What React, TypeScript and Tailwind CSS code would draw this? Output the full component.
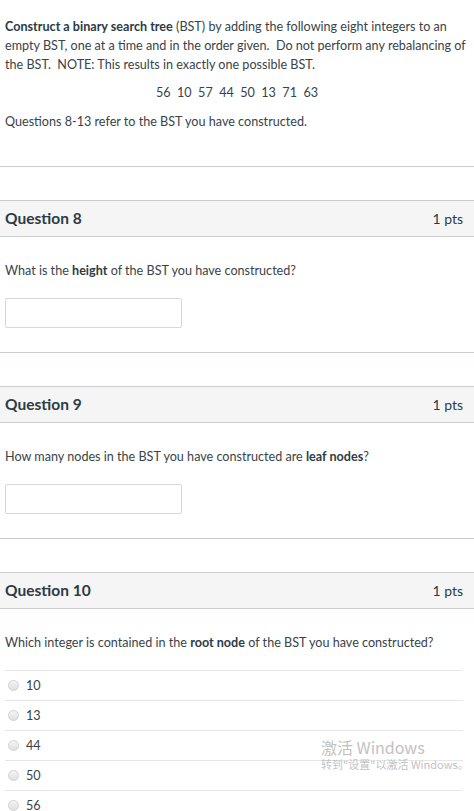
import React from "react";

const questions = [
  {
    num: 8,
    body: (
      <>
        What is the <strong className="font-bold text-[#2d3b45]">height</strong> of the BST you have constructed?
      </>
    ),
  },
  {
    num: 9,
    body: (
      <>
        How many nodes in the BST you have constructed are{" "}
        <strong className="font-bold text-[#2d3b45]">leaf nodes</strong>?
      </>
    ),
  },
];

const options = ["10", "13", "44", "50", "56"];

function QuestionHeader({ num }: { num: number }) {
  return (
    <div className="flex h-[37px] items-center justify-between border-y border-[#c9cdd1] bg-[#f5f5f5] pl-[5px] pr-[11px]">
      <span className="text-[15.5px] font-bold text-[#2d3b45]">Question {num}</span>
      <span className="text-[14px] text-[#2d3b45]">1 pts</span>
    </div>
  );
}

export default function App() {
  return (
    <div className="relative h-[811px] overflow-hidden bg-white font-['Lato','Liberation_Sans',sans-serif] text-[12.6px] leading-[19px] text-[#38434a]">
      <section className="px-[5px] pt-[17px] pb-[35px]">
        <p>
          <strong className="font-bold text-[#2d3b45]">Construct a binary search tree</strong> (BST) by adding the
          following eight integers to an empty BST, one at a time and in the order given.&nbsp; Do not perform any
          rebalancing of the BST.&nbsp; NOTE: This results in exactly one possible BST.
        </p>
        <p className="mt-[9px] text-center whitespace-pre">56  10  57  44  50  13  71  63</p>
        <p className="mt-[10px]">Questions 8-13 refer to the BST you have constructed.</p>
      </section>

      {questions.map((q) => (
        <section key={q.num} className="border-t border-[#c9cdd1] pt-[33px] pb-[24px]">
          <QuestionHeader num={q.num} />
          <p className="mt-[24px] px-[5px]">{q.body}</p>
          <div className="mt-[18px] ml-[5px] h-[30px] w-[177px] rounded-[2px] border border-[#d6d9db] bg-white" />
        </section>
      ))}

      <section className="border-t border-[#c9cdd1] pt-[33px]">
        <QuestionHeader num={10} />
        <p className="mt-[24px] px-[5px]">
          Which integer is contained in the <strong className="font-bold text-[#2d3b45]">root node</strong> of the
          BST you have constructed?
        </p>
        <ul className="mt-[18px] ml-[5px] mr-[11px]">
          {options.map((o) => (
            <li key={o} className="flex h-[30px] items-center gap-[7px] border-t border-[#e4e6e8] pl-[3px]">
              <span className="h-[11px] w-[11px] rounded-full border border-[#d0d2d4] bg-gradient-to-b from-[#f4f4f4] to-[#e0e0e0]" />
              <span>{o}</span>
            </li>
          ))}
        </ul>
      </section>

      <div className="pointer-events-none absolute left-[321px] top-[737px] font-['Noto_Sans_CJK_SC','Noto_Sans',sans-serif] text-[#c2c2c2]">
        <div className="text-[16px] leading-[20px]">激活 Windows</div>
        <div className="text-[11px] leading-[14px]">转到"设置"以激活 Windows。</div>
      </div>
    </div>
  );
}
